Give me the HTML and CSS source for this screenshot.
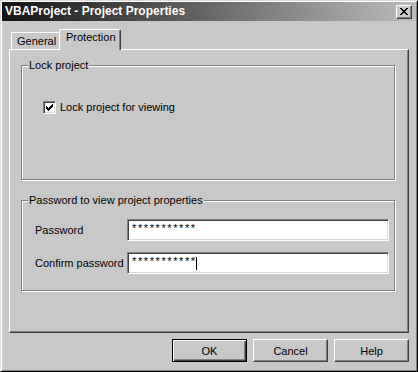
FILE: index.html
```html
<!DOCTYPE html>
<html>
<head>
<meta charset="utf-8">
<title>VBAProject - Project Properties</title>
<link rel="stylesheet" href="styles.css">
</head>
<body>
<div class="window">
  <div class="titlebar">
    <span class="title">VBAProject - Project Properties</span>
    <span class="close">
      <svg width="8" height="7" viewBox="0 0 8 7" shape-rendering="crispEdges"><path d="M0 0h2v1h-2zM6 0h2v1h-2zM1 1h2v1h-2zM5 1h2v1h-2zM2 2h4v1h-4zM3 3h2v1h-2zM2 4h4v1h-4zM1 5h2v1h-2zM5 5h2v1h-2zM0 6h2v1h-2zM6 6h2v1h-2z" fill="#000"/></svg>
    </span>
  </div>
  <div class="body">
    <div class="tabs">
      <div class="tab">General</div>
      <div class="tab active">Protection</div>
    </div>
    <div class="panel">
      <fieldset class="group group-lock">
        <legend>Lock project</legend>
        <label class="check">
          <span class="box">
            <svg width="7" height="7" viewBox="0 0 7 7" shape-rendering="crispEdges"><path d="M6 0h1v3h-1zM5 1h1v3h-1zM4 2h1v3h-1zM0 2h1v3h-1zM1 3h1v3h-1zM2 4h1v3h-1zM3 3h1v3h-1z" fill="#000"/></svg>
          </span>
          <span>Lock project for viewing</span>
        </label>
      </fieldset>
      <fieldset class="group group-pass">
        <legend>Password to view project properties</legend>
        <div class="row">
          <span class="lbl">Password</span>
          <span class="field"><span class="stars">***********</span></span>
        </div>
        <div class="row">
          <span class="lbl">Confirm password</span>
          <span class="field"><span class="stars">***********</span><span class="caret"></span></span>
        </div>
      </fieldset>
    </div>
    <div class="buttons">
      <button class="btn default">OK</button>
      <button class="btn">Cancel</button>
      <button class="btn">Help</button>
    </div>
  </div>
</div>
</body>
</html>
```

FILE: styles.css
```css
html, body {
  margin: 0;
  padding: 0;
  background: #c8c8c8;
}

body {
  font-family: "Liberation Sans", Arial, sans-serif;
  font-size: 11px;
  line-height: 13px;
  color: #000;
}

.window {
  width: 418px;
  height: 372px;
  box-sizing: border-box;
  border: 1px solid;
  border-color: #dcdcdc #000 #000 #dcdcdc;
  box-shadow: inset 1px 1px 0 #fff, inset -1px -1px 0 #808080;
  padding: 1px;
  display: flex;
  flex-direction: column;
  background: #c8c8c8;
}

.titlebar {
  height: 19px;
  flex: none;
  display: flex;
  align-items: center;
  justify-content: space-between;
  padding: 0 4px 0 3px;
  background: linear-gradient(to right, #141414, #bcbcbc);
}

.title {
  color: #fff;
  font-weight: bold;
  font-size: 12px;
}

.close {
  width: 16px;
  height: 14px;
  box-sizing: border-box;
  display: flex;
  align-items: center;
  justify-content: center;
  background: #c8c8c8;
  border: 1px solid;
  border-color: #fff #404040 #404040 #fff;
  box-shadow: inset -1px -1px 0 #808080;
  padding-right: 1px;
}

.close svg { display: block; }

.body {
  flex: 1;
  display: flex;
  flex-direction: column;
  padding: 8px 7px 8px 7px;
}

.tabs {
  height: 20px;
  flex: none;
  display: flex;
  align-items: flex-end;
  padding-left: 2px;
  position: relative;
  z-index: 1;
}

.tab {
  height: 17px;
  box-sizing: border-box;
  padding: 2px 0 0 5px;
  width: 48px;
  border-top: 1px solid #fff;
  border-left: 1px solid #fff;
  border-radius: 2px 0 0 0;
  background: #c8c8c8;
}

.tab.active {
  width: 62px;
  height: 21px;
  margin-bottom: -1px;
  padding: 1px 0 0 6px;
  border-right: 1px solid #404040;
  box-shadow: inset -1px 0 0 #808080;
  border-radius: 2px 2px 0 0;
}

.panel {
  flex: 1;
  box-sizing: border-box;
  border: 1px solid;
  border-color: #fff #404040 #404040 #fff;
  box-shadow: inset -1px -1px 0 #808080;
  padding: 9px 13px 0 11px;
  display: flex;
  flex-direction: column;
}

.group {
  margin: 0;
  padding: 0;
  min-width: 0;
  border: 1px solid #808080;
  box-shadow: inset 1px 1px 0 #fff, 1px 1px 0 #fff;
}

.group legend {
  margin-left: 6px;
  padding: 0 1px;
  background: #c8c8c8;
  line-height: 13px;
}

.group-lock {
  padding: 29px 0 65px 0;
}

.group-lock .check {
  margin-left: 21px;
}

.group-pass {
  margin-top: 14px;
  padding: 12px 0 16px 0;
  display: flex;
  flex-direction: column;
  gap: 11px;
}

.group-pass .row {
  margin-left: 13px;
}

.check {
  display: flex;
  align-items: center;
  gap: 4px;
  height: 13px;
}

.box {
  width: 13px;
  height: 13px;
  box-sizing: border-box;
  border: 1px solid;
  border-color: #808080 #fff #fff #808080;
  box-shadow: inset 1px 1px 0 #404040, inset -1px -1px 0 #d8d8d8;
  background: #fff;
  display: flex;
  padding: 2px 0 0 2px;
}

.box svg { display: block; }

.row {
  display: flex;
  align-items: center;
  height: 22px;
}

.lbl {
  width: 92px;
  flex: none;
}

.field {
  width: 262px;
  height: 22px;
  box-sizing: border-box;
  border: 1px solid;
  border-color: #808080 #fff #fff #808080;
  box-shadow: inset 1px 1px 0 #404040, inset -1px -1px 0 #d8d8d8;
  background: #fff;
  display: flex;
  align-items: center;
  padding: 0 0 0 4px;
}

.stars {
  font-size: 11px;
  letter-spacing: 1.6px;
  position: relative;
  top: -2px;
}

.caret {
  width: 1px;
  height: 13px;
  background: #000;
  margin-left: -1px;
}

.buttons {
  flex: none;
  display: flex;
  justify-content: flex-end;
  gap: 6px;
  margin-top: 6px;
}

.btn {
  width: 75px;
  height: 23px;
  box-sizing: border-box;
  margin: 0;
  padding: 0;
  font-family: "Liberation Sans", Arial, sans-serif;
  font-size: 11px;
  color: #000;
  background: #c8c8c8;
  border: 1px solid;
  border-color: #fff #404040 #404040 #fff;
  box-shadow: inset -1px -1px 0 #808080;
}

.btn.default {
  border-color: #000;
  box-shadow: inset 1px 1px 0 #fff, inset -1px -1px 0 #404040, inset -2px -2px 0 #808080;
}
```
